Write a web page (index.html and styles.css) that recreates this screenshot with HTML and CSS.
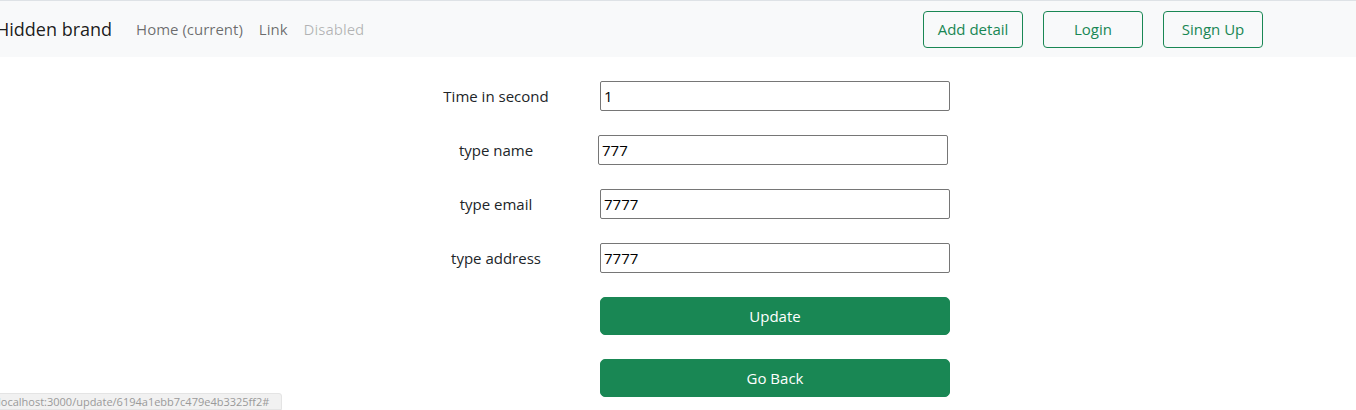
FILE: index.html
```html
<!DOCTYPE html>
<html lang="en">
<head>
<meta charset="utf-8">
<title>Update</title>
<link rel="stylesheet" href="styles.css">
</head>
<body>
<nav class="navbar">
  <a class="brand" href="#">Hidden brand</a>
  <ul class="nav-links">
    <li><a class="nav-link active" href="#">Home (current)</a></li>
    <li><a class="nav-link" href="#">Link</a></li>
    <li><a class="nav-link disabled" href="#">Disabled</a></li>
  </ul>
  <div class="nav-actions">
    <button class="btn-outline">Add detail</button>
    <button class="btn-outline">Login</button>
    <button class="btn-outline">Singn Up</button>
  </div>
</nav>
<main class="form">
  <label class="label">Time in second</label>
  <input class="field" type="text" value="1">
  <label class="label">type name</label>
  <input class="field shifted" type="text" value="777">
  <label class="label">type email</label>
  <input class="field" type="text" value="7777">
  <label class="label">type address</label>
  <input class="field" type="text" value="7777">
  <span></span>
  <div class="actions">
    <button class="btn-green">Update</button>
    <button class="btn-green">Go Back</button>
  </div>
</main>
<div class="status">localhost:3000/update/6194a1ebb7c479e4b3325ff2#</div>
</body>
</html>
```
FILE: styles.css
```css
* { box-sizing: border-box; }
html, body { margin: 0; padding: 0; }
body {
  font-family: "Open Sans", "Noto Sans", sans-serif;
  font-size: 15px;
  color: #212529;
  background: #fff;
  width: 1356px;
  height: 410px;
  overflow: hidden;
  position: relative;
}
.navbar {
  display: flex;
  align-items: center;
  height: 57px;
  background: #f8f9fa;
  border-top: 1px solid #dee2e6;
  padding-left: 0;
}
.brand {
  margin-left: -4px;
  font-size: 18px;
  color: rgba(0,0,0,.9);
  text-decoration: none;
  margin-right: 24px;
}
.nav-links {
  display: flex;
  list-style: none;
  margin: 0;
  padding: 0;
  gap: 16px;
}
.nav-link {
  color: rgba(0,0,0,.58);
  text-decoration: none;
  font-size: 15px;
}
.nav-link.disabled { color: rgba(0,0,0,.28); }
.nav-actions {
  display: flex;
  gap: 20px;
  margin-left: auto;
  margin-right: 93px;
}
.btn-outline {
  width: 100px;
  height: 37px;
  border: 1px solid #198754;
  border-radius: 4px;
  background: transparent;
  color: #198754;
  font-family: inherit;
  font-size: 15px;
}
.form {
  display: grid;
  grid-template-columns: 150px 350px;
  column-gap: 29px;
  row-gap: 24px;
  margin-left: 421px;
  margin-top: 24px;
  align-items: center;
}
.label {
  text-align: center;
  font-size: 15px;
  color: #212529;
}
.field {
  width: 350px;
  height: 30px;
  border: 1px solid #767676;
  border-radius: 2px;
  padding: 0 3px;
  font-family: inherit;
  font-size: 15px;
  color: #000;
}
.field.shifted { margin-left: -2px; }
.actions {
  display: flex;
  flex-direction: column;
  gap: 24px;
}
.btn-green {
  width: 350px;
  height: 38px;
  background: #198754;
  border: 1px solid #198754;
  border-radius: 5px;
  color: #fff;
  font-family: inherit;
  font-size: 15px;
}
.status {
  position: absolute;
  left: -6px;
  bottom: 0;
  height: 17px;
  padding: 0 12px 0 3px;
  background: #f1f1f1;
  border: 1px solid #e4e4e4;
  border-radius: 0 3px 0 0;
  font-size: 11px;
  line-height: 16px;
  color: #9a9a9a;
}
```
